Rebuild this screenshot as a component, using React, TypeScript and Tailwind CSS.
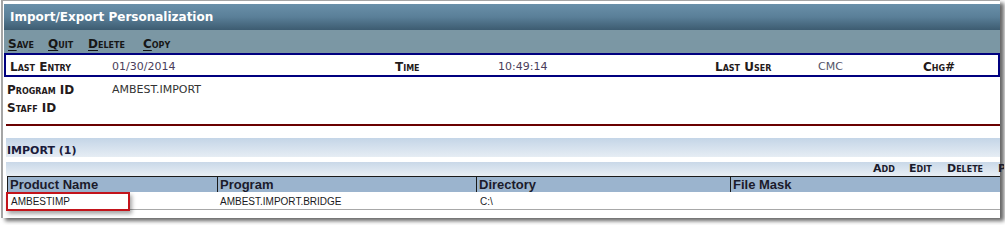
import React from 'react'

const sc = "font-['DejaVu_Sans',sans-serif] font-bold [font-variant:small-caps]"

const Ul: React.FC<{ k: string; rest: string }> = ({ k, rest }) => (
  <span>
    <span className="underline underline-offset-2">{k}</span>
    {rest}
  </span>
)

const App: React.FC = () => {
  return (
    <div className="relative w-[1005px] h-[225px] bg-white pl-px overflow-hidden">
      <div className="w-[999px] h-[218px] bg-white border-l-2 border-t border-[#a5a5a5] pl-px pt-[3px] shadow-[4px_3px_4px_rgba(0,0,0,0.6)] flex flex-col">
        {/* title bar */}
        <div className="h-[26px] shrink-0 bg-linear-to-b from-[#6a90a9] via-[#5a7f98] to-[#3d5c71] flex items-center pl-[6px] text-white text-[12px] font-bold font-['DejaVu_Sans',sans-serif]">
          Import/Export Personalization
        </div>

        {/* toolbar */}
        <div className={`h-[23px] shrink-0 bg-[#7b97a4] flex items-end pl-[4px] text-[12px] leading-[18px] text-[#161616] ${sc}`}>
          <div className="w-[40px]"><Ul k="S" rest="ave" /></div>
          <div className="w-[40px]"><Ul k="Q" rest="uit" /></div>
          <div className="w-[55px]"><Ul k="D" rest="elete" /></div>
          <div><Ul k="C" rest="opy" /></div>
        </div>

        {/* entry box */}
        <div className="h-[24px] shrink-0 border-2 border-[#00007f] flex items-center pl-[4px] pt-[4px] text-[12px]">
          <div className={`w-[102px] text-[#241a1a] ${sc}`}>Last Entry</div>
          <div className="w-[283px] text-[11px] text-[#4a3d5a] font-['DejaVu_Sans',sans-serif]">01/30/2014</div>
          <div className={`w-[103px] text-[#241a1a] ${sc}`}>Time</div>
          <div className="w-[217px] text-[11px] text-[#4a3d5a] font-['DejaVu_Sans',sans-serif]">10:49:14</div>
          <div className={`w-[103px] text-[#241a1a] ${sc}`}>Last User</div>
          <div className="w-[105px] text-[11px] text-[#55556a] font-['DejaVu_Sans',sans-serif]">CMC</div>
          <div className={`text-[#241a1a] ${sc}`}>Chg#</div>
        </div>

        {/* program info */}
        <div className="pt-[4px] pl-[3px] text-[12px]">
          <div className="h-[18px] flex items-center">
            <div className={`w-[105px] text-[#241a1a] ${sc}`}>Program ID</div>
            <div className="text-[11px] text-[#333] font-['DejaVu_Sans',sans-serif]">AMBEST.IMPORT</div>
          </div>
          <div className="h-[18px] flex items-center">
            <div className={`w-[105px] text-[#241a1a] ${sc}`}>Staff ID</div>
          </div>
        </div>

        <div className="pl-[2px]">
          <div className="mt-[7px] h-[2px] bg-[#6a0000]" />

          {/* section bar */}
          <div className="mt-[12px] h-[19px] bg-linear-to-b from-[#c4d5e7] to-[#e6edf4] flex items-end pb-px pl-px text-[11px] leading-[11px] font-bold text-[#1a1a3a] font-['DejaVu_Sans',sans-serif]">
            IMPORT (1)
          </div>

          {/* action bar */}
          <div className={`mt-[5px] h-[14px] bg-linear-to-b from-[#c9d8e8] to-[#e9eff5] flex items-center pl-[867px] pt-px whitespace-nowrap text-[11px] text-[#1a1a2a] ${sc}`}>
            <div className="w-[36px] shrink-0">Add</div>
            <div className="w-[38px] shrink-0">Edit</div>
            <div className="w-[51px] shrink-0">Delete</div>
            <div className="w-[6px] shrink-0 overflow-hidden">P</div>
          </div>

          {/* table */}
          <div className="ml-px font-['Liberation_Sans',Arial,sans-serif]">
            <div className="h-[16px] bg-[#9bb4ce] flex text-[13px] font-bold text-[#1b1b2b] leading-[16px]">
              <div className="w-[210px] border-l border-t border-[#1a1a1a] pl-[2px]">Product Name</div>
              <div className="w-[259px] border-l border-t border-[#1a1a1a] pl-[2px]">Program</div>
              <div className="w-[254px] border-l border-t border-[#1a1a1a] pl-[2px]">Directory</div>
              <div className="flex-1 border-l border-t border-[#1a1a1a] pl-[2px]">File Mask</div>
            </div>
            <div className="h-[18px] flex items-center pt-px border-b border-[#a8a8a8] text-[10px] text-[#1a1a22]">
              <div className="w-[210px] pl-[4px]">AMBESTIMP</div>
              <div className="w-[259px] pl-[3px]">AMBEST.IMPORT.BRIDGE</div>
              <div className="w-[254px] pl-[4px]">C:\</div>
              <div className="flex-1" />
            </div>
          </div>
        </div>
      </div>

      {/* highlight callout */}
      <div className="absolute left-[6px] top-[192px] w-[124px] h-[19px] border-2 border-[#c3141b] shadow-[2px_3px_4px_rgba(0,0,0,0.35)]" />
    </div>
  )
}

export default App
